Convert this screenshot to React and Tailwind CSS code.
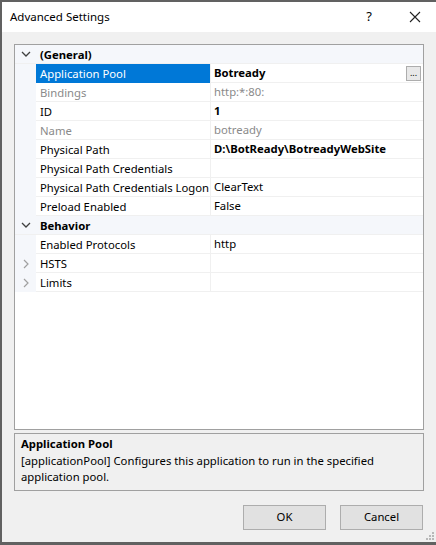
import React from "react";

const rows = [
  { type: "cat", name: "(General)", open: true },
  { name: "Application Pool", value: "Botready", bold: true, selected: true, button: true },
  { name: "Bindings", value: "http:*:80:", readonly: true },
  { name: "ID", value: "1", bold: true },
  { name: "Name", value: "botready", readonly: true },
  { name: "Physical Path", value: "D:\\BotReady\\BotreadyWebSite", bold: true },
  { name: "Physical Path Credentials", value: "" },
  { name: "Physical Path Credentials Logon", value: "ClearText" },
  { name: "Preload Enabled", value: "False" },
  { type: "cat", name: "Behavior", open: true },
  { name: "Enabled Protocols", value: "http" },
  { name: "HSTS", value: "", expandable: true },
  { name: "Limits", value: "", expandable: true },
];

const ChevronDown = () => (
  <svg width="10" height="6" viewBox="0 0 10 6" fill="none">
    <path d="M1 1l4 4 4-4" stroke="#404040" strokeWidth="1.3" />
  </svg>
);

const ChevronRight = () => (
  <svg width="6" height="10" viewBox="0 0 6 10" fill="none">
    <path d="M1 1l4 4-4 4" stroke="#a0a0a0" strokeWidth="1.2" />
  </svg>
);

const Row = ({ row }) => {
  if (row.type === "cat") {
    return (
      <div className="flex h-[19px] bg-[#f5f7fb] border-b border-[#f0f0f0]">
        <div className="w-[21px] flex items-center justify-center">
          <ChevronDown />
        </div>
        <div className="flex-1 pl-[4px] font-bold leading-[19px] text-black">{row.name}</div>
      </div>
    );
  }
  return (
    <div className="flex h-[19px]">
      <div className="w-[21px] bg-[#f5f7fb] flex items-center justify-center">
        {row.expandable && <ChevronRight />}
      </div>
      <div
        className={`w-[174px] pl-[4px] leading-[19px] whitespace-nowrap overflow-hidden border-b ${
          row.selected
            ? "bg-[#0078d7] text-white border-[#0078d7]"
            : row.readonly
            ? "text-[#8a8a8a] border-[#f0f0f0]"
            : "text-black border-[#f0f0f0]"
        }`}
      >
        {row.name}
      </div>
      <div className="w-px bg-[#f0f0f0]" />
      <div
        className={`flex-1 flex items-center justify-between pl-[3px] pr-[2px] border-b border-[#f0f0f0] whitespace-nowrap ${
          row.bold ? "font-bold text-black" : row.readonly ? "text-[#8a8a8a]" : "text-black"
        }`}
      >
        <span>{row.value}</span>
        {row.button && (
          <span className="w-[15px] h-[15px] bg-[#e8e8e8] border border-[#adadad] text-[9px] leading-[10px] text-black font-normal flex items-end justify-center pb-[2px]">
            ...
          </span>
        )}
      </div>
    </div>
  );
};

export default function App() {
  return (
    <div
      className="w-[436px] h-[545px] flex flex-col border-l-2 border-t-2 border-b-[3px] border-[#616161] text-[11.3px] text-black overflow-hidden"
      style={{ fontFamily: '"Noto Sans", "Segoe UI", sans-serif' }}
    >
      <div className="h-[30px] bg-white flex items-center pl-[8px]">
        <span className="flex-1 text-[11.5px]">Advanced Settings</span>
        <span className="w-[20px] text-center text-[13px] mr-[30px]">?</span>
        <svg width="12" height="12" viewBox="0 0 12 12" className="mr-[15px]">
          <path d="M1 1l10 10M11 1L1 11" stroke="#222" strokeWidth="1.1" />
        </svg>
      </div>

      <div className="flex-1 bg-[#f0f0f0] flex flex-col px-[12px] pt-[12px] relative">
        <div className="h-[386px] bg-white border border-[#a0a0a0] flex flex-col">
          {rows.map((r, i) => (
            <Row key={i} row={r} />
          ))}
        </div>

        <div className="mt-[3px] h-[58px] border border-[#a0a0a0] px-[6px] pt-[2px] leading-[16.5px]">
          <div className="font-bold">Application Pool</div>
          <div>
            [applicationPool] Configures this application to run in the specified
            <br />
            application pool.
          </div>
        </div>

        <div className="flex justify-end gap-[14px] mt-[14px] pr-px">
          <button className="w-[83px] h-[25px] bg-[#e1e1e1] border border-[#adadad]">OK</button>
          <button className="w-[83px] h-[25px] bg-[#e1e1e1] border border-[#adadad]">Cancel</button>
        </div>

        <svg width="10" height="10" viewBox="0 0 10 10" className="absolute right-[1px] bottom-[1px]">
          <g fill="#b8b8b8">
            <rect x="7" y="1" width="2" height="2" />
            <rect x="4" y="4" width="2" height="2" />
            <rect x="7" y="4" width="2" height="2" />
            <rect x="1" y="7" width="2" height="2" />
            <rect x="4" y="7" width="2" height="2" />
            <rect x="7" y="7" width="2" height="2" />
          </g>
        </svg>
      </div>
    </div>
  );
}
